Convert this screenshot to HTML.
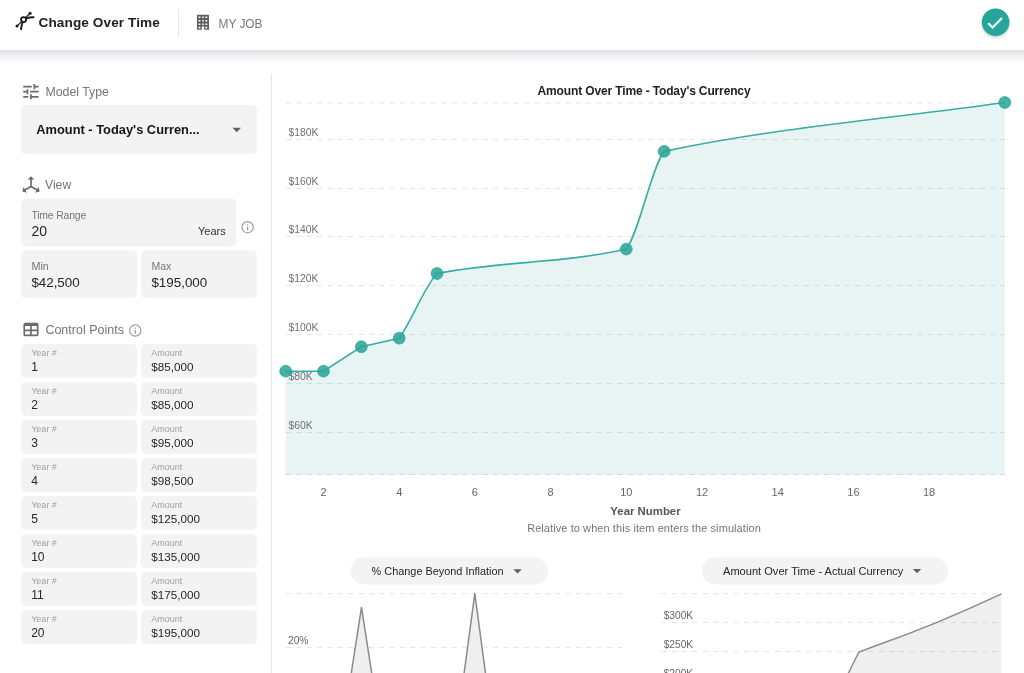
<!DOCTYPE html>
<html><head><meta charset="utf-8">
<style>
html,body{margin:0;padding:0;background:#fff;width:1024px;height:673px;overflow:hidden;}
svg{display:block;font-family:"Liberation Sans",sans-serif;will-change:transform;}
</style></head>
<body>
<svg width="1024" height="673" viewBox="0 0 1024 673">
<defs>
<linearGradient id="hs" x1="0" y1="0" x2="0" y2="1">
<stop offset="0" stop-color="#dfe0e6"/>
<stop offset="0.35" stop-color="#f0f0f3"/>
<stop offset="1" stop-color="#ffffff"/>
</linearGradient>
<filter id="bs" x="-50%" y="-50%" width="200%" height="200%"><feDropShadow dx="0" dy="1.5" stdDeviation="1.5" flood-color="#000" flood-opacity="0.18"/></filter>
</defs>
<!-- header -->
<rect x="0" y="50" width="1024" height="14" fill="url(#hs)"/>
<rect x="0" y="0" width="1024" height="50" fill="#fff"/>
<g fill="none" stroke="#1a1a1a">
<line x1="17" y1="26.1" x2="30.1" y2="13.2" stroke-width="1.2"/>
<circle cx="23.6" cy="19.6" r="2.55" stroke-width="1.8" fill="#fff"/>
<path d="M21.1,29.2 C21.5,26 22,23.5 22.6,22.2 M26.4,18.3 C28.5,17.5 31,17.1 33.6,17.2" stroke-width="1.9" stroke-linecap="round"/>
</g>
<circle cx="17" cy="26.1" r="1.5" fill="#1a1a1a"/>
<circle cx="30.1" cy="13.2" r="1.5" fill="#1a1a1a"/>
<text x="38.5" y="26.5" font-size="13.6" font-weight="bold" letter-spacing="0.1" fill="#212121">Change Over Time</text>
<line x1="178.5" y1="9" x2="178.5" y2="36" stroke="#e3e3e3" stroke-width="1"/>
<g fill="#5f5f5f">
<path d="M197,14.8 H209 V29.8 H204.1 V26.4 H201.8 V29.8 H197 Z M198.6,16.4 V18 H200.4 V16.4 Z M202.2,16.4 V18 H203.8 V16.4 Z M205.4,16.4 V18 H207.2 V16.4 Z M198.6,20 V21.6 H200.4 V20 Z M202.2,20 V21.6 H203.8 V20 Z M205.4,20 V21.6 H207.2 V20 Z M198.6,23.4 V25 H200.4 V23.4 Z M202.2,23.4 V25 H203.8 V23.4 Z M205.4,23.4 V25 H207.2 V23.4 Z M198.6,26.8 V28.4 H200.4 V26.8 Z M205.4,26.8 V28.4 H207.2 V26.8 Z" fill-rule="evenodd"/>
</g>
<text x="218.5" y="27.7" font-size="11.9" fill="#757575">MY JOB</text>
<circle cx="995.6" cy="22.2" r="13.8" fill="#26a69a" filter="url(#bs)"/>
<polyline points="988.2,23.3 992.6,27.6 1002,18.1" fill="none" stroke="#fff" stroke-width="2.1"/>

<!-- left panel -->
<line x1="271.5" y1="74" x2="271.5" y2="673" stroke="#e4e4e4" stroke-width="1"/>
<path transform="translate(20.7,81.5) scale(0.85)" fill="#6b6b6b" d="M3 17v2h6v-2H3zM3 5v2h10V5H3zm10 16v-2h8v-2h-8v-2h-2v6h2zM7 9v2H3v2h4v2h2V9H7zm14 4v-2H11v2h10zm-6-4h2V7h4V5h-4V3h-2v6z"/>
<text x="45.4" y="95.8" font-size="12.35" fill="#757575">Model Type</text>
<rect x="21" y="105" width="236" height="49" rx="5" fill="#f3f3f3"/>
<text x="36.3" y="133.5" font-size="12.85" font-weight="bold" fill="#161616">Amount - Today's Curren...</text>
<path d="M232.5,127.7 H241 L236.75,132.2 Z" fill="#5f5f5f"/>

<path transform="translate(21.05,174.5) scale(0.83)" fill="#6b6b6b" d="M12,2L16,6H13V13.85L19.53,17.61L21,15.03L22.5,20.5L17,21.96L18.53,19.35L12,15.58L5.47,19.35L7,21.96L1.5,20.5L3,15.03L4.47,17.61L11,13.85V6H8L12,2Z"/>
<text x="45" y="188.7" font-size="12.2" fill="#757575">View</text>
<rect x="21" y="198.5" width="215.2" height="48" rx="5" fill="#f3f3f3"/>
<text x="31.4" y="218.6" font-size="10.4" letter-spacing="-0.15" fill="#757575">Time Range</text>
<text x="31.4" y="235.8" font-size="14" fill="#262626">20</text>
<text x="225.7" y="234.8" font-size="11" fill="#333" text-anchor="end">Years</text>
<path transform="translate(240.1,219.7) scale(0.625)" fill="#9a9a9a" d="M11,9H13V7H11M12,20C7.59,20 4,16.41 4,12C4,7.59 7.59,4 12,4C16.41,4 20,7.59 20,12C20,16.41 16.41,20 12,20M12,2A10,10 0 0,0 2,12A10,10 0 0,0 12,22A10,10 0 0,0 22,12A10,10 0 0,0 12,2M11,17H13V11H11V17Z"/>
<rect x="21" y="250.5" width="116" height="47.5" rx="5" fill="#f3f3f3"/>
<rect x="141" y="250.5" width="116" height="47.5" rx="5" fill="#f3f3f3"/>
<text x="31.4" y="270.1" font-size="10.8" fill="#757575">Min</text>
<text x="31.4" y="287.3" font-size="13.35" fill="#262626">$42,500</text>
<text x="151.4" y="270.1" font-size="10.5" fill="#757575">Max</text>
<text x="151.4" y="287.3" font-size="13.4" fill="#262626">$195,000</text>

<path transform="translate(20.9,319.4) scale(0.84)" fill="#6b6b6b" d="M5,4H19A2,2 0 0,1 21,6V18A2,2 0 0,1 19,20H5A2,2 0 0,1 3,18V6A2,2 0 0,1 5,4M5,8V12H11V8H5M13,8V12H19V8H13M5,14V18H11V14H5M13,14V18H19V14H13Z"/>
<text x="45.4" y="334" font-size="12.5" fill="#757575">Control Points</text>
<path transform="translate(127.8,323.1) scale(0.625)" fill="#9a9a9a" d="M11,9H13V7H11M12,20C7.59,20 4,16.41 4,12C4,7.59 7.59,4 12,4C16.41,4 20,7.59 20,12C20,16.41 16.41,20 12,20M12,2A10,10 0 0,0 2,12A10,10 0 0,0 12,22A10,10 0 0,0 22,12A10,10 0 0,0 12,2M11,17H13V11H11V17Z"/>
<rect x="21" y="344" width="116" height="34" rx="5" fill="#f3f3f3"/><rect x="141" y="344" width="116" height="34" rx="5" fill="#f3f3f3"/><text x="31.2" y="356.4" font-size="9" fill="#9e9e9e">Year #</text><text x="31.2" y="370.7" font-size="12" fill="#262626">1</text><text x="151.2" y="356.4" font-size="9" fill="#9e9e9e">Amount</text><text x="151.2" y="370.7" font-size="11.7" fill="#262626">$85,000</text><rect x="21" y="382" width="116" height="34" rx="5" fill="#f3f3f3"/><rect x="141" y="382" width="116" height="34" rx="5" fill="#f3f3f3"/><text x="31.2" y="394.4" font-size="9" fill="#9e9e9e">Year #</text><text x="31.2" y="408.7" font-size="12" fill="#262626">2</text><text x="151.2" y="394.4" font-size="9" fill="#9e9e9e">Amount</text><text x="151.2" y="408.7" font-size="11.7" fill="#262626">$85,000</text><rect x="21" y="420" width="116" height="34" rx="5" fill="#f3f3f3"/><rect x="141" y="420" width="116" height="34" rx="5" fill="#f3f3f3"/><text x="31.2" y="432.4" font-size="9" fill="#9e9e9e">Year #</text><text x="31.2" y="446.7" font-size="12" fill="#262626">3</text><text x="151.2" y="432.4" font-size="9" fill="#9e9e9e">Amount</text><text x="151.2" y="446.7" font-size="11.7" fill="#262626">$95,000</text><rect x="21" y="458" width="116" height="34" rx="5" fill="#f3f3f3"/><rect x="141" y="458" width="116" height="34" rx="5" fill="#f3f3f3"/><text x="31.2" y="470.4" font-size="9" fill="#9e9e9e">Year #</text><text x="31.2" y="484.7" font-size="12" fill="#262626">4</text><text x="151.2" y="470.4" font-size="9" fill="#9e9e9e">Amount</text><text x="151.2" y="484.7" font-size="11.7" fill="#262626">$98,500</text><rect x="21" y="496" width="116" height="34" rx="5" fill="#f3f3f3"/><rect x="141" y="496" width="116" height="34" rx="5" fill="#f3f3f3"/><text x="31.2" y="508.4" font-size="9" fill="#9e9e9e">Year #</text><text x="31.2" y="522.7" font-size="12" fill="#262626">5</text><text x="151.2" y="508.4" font-size="9" fill="#9e9e9e">Amount</text><text x="151.2" y="522.7" font-size="11.7" fill="#262626">$125,000</text><rect x="21" y="534" width="116" height="34" rx="5" fill="#f3f3f3"/><rect x="141" y="534" width="116" height="34" rx="5" fill="#f3f3f3"/><text x="31.2" y="546.4" font-size="9" fill="#9e9e9e">Year #</text><text x="31.2" y="560.7" font-size="12" fill="#262626">10</text><text x="151.2" y="546.4" font-size="9" fill="#9e9e9e">Amount</text><text x="151.2" y="560.7" font-size="11.7" fill="#262626">$135,000</text><rect x="21" y="572" width="116" height="34" rx="5" fill="#f3f3f3"/><rect x="141" y="572" width="116" height="34" rx="5" fill="#f3f3f3"/><text x="31.2" y="584.4" font-size="9" fill="#9e9e9e">Year #</text><text x="31.2" y="598.7" font-size="12" fill="#262626">11</text><text x="151.2" y="584.4" font-size="9" fill="#9e9e9e">Amount</text><text x="151.2" y="598.7" font-size="11.7" fill="#262626">$175,000</text><rect x="21" y="610" width="116" height="34" rx="5" fill="#f3f3f3"/><rect x="141" y="610" width="116" height="34" rx="5" fill="#f3f3f3"/><text x="31.2" y="622.4" font-size="9" fill="#9e9e9e">Year #</text><text x="31.2" y="636.7" font-size="12" fill="#262626">20</text><text x="151.2" y="622.4" font-size="9" fill="#9e9e9e">Amount</text><text x="151.2" y="636.7" font-size="11.7" fill="#262626">$195,000</text>

<!-- main chart -->
<text x="644" y="94.6" font-size="12" letter-spacing="-0.14" font-weight="bold" fill="#212121" text-anchor="middle">Amount Over Time - Today's Currency</text>
<path d="M285.65,371.19 L323.50,371.19 L361.35,346.76 L399.20,338.21 C411.82,320.95 424.43,286.43 437.05,273.48 C500.13,261.06 563.22,263.60 626.30,249.06 C638.92,232.77 651.53,167.64 664.15,151.35 C777.70,127.30 891.25,118.53 1004.80,102.50 L1004.80,475.00 L285.65,475.00 Z" fill="#e8f4f4"/>
<g stroke="#000" stroke-opacity="0.1" stroke-width="1" stroke-dasharray="5.175 5.175"><line x1="286" x2="1005" y1="103.0" y2="103.0"/><line x1="286" x2="1005" y1="139.5" y2="139.5"/><line x1="286" x2="1005" y1="188.5" y2="188.5"/><line x1="286" x2="1005" y1="236.5" y2="236.5"/><line x1="286" x2="1005" y1="285.5" y2="285.5"/><line x1="286" x2="1005" y1="334.5" y2="334.5"/><line x1="286" x2="1005" y1="383.5" y2="383.5"/><line x1="286" x2="1005" y1="432.5" y2="432.5"/><line x1="286" x2="1005" y1="474.5" y2="474.5"/></g>
<g font-size="10.35" fill="#707070"><text x="288.6" y="135.6">$180K</text><text x="288.6" y="184.5">$160K</text><text x="288.6" y="233.3">$140K</text><text x="288.6" y="282.2">$120K</text><text x="288.6" y="331.0">$100K</text><text x="288.6" y="379.9">$80K</text><text x="288.6" y="428.8">$60K</text></g>
<path d="M285.65,371.19 L323.50,371.19 L361.35,346.76 L399.20,338.21 C411.82,320.95 424.43,286.43 437.05,273.48 C500.13,261.06 563.22,263.60 626.30,249.06 C638.92,232.77 651.53,167.64 664.15,151.35 C777.70,127.30 891.25,118.53 1004.80,102.50" fill="none" stroke="#3aada2" stroke-width="1.6"/>
<g fill="#2ca699" fill-opacity="0.88" stroke="#22a092" stroke-opacity="0.85" stroke-width="0.8"><circle cx="285.65" cy="371.19" r="5.9"/><circle cx="323.50" cy="371.19" r="5.9"/><circle cx="361.35" cy="346.76" r="5.9"/><circle cx="399.20" cy="338.21" r="5.9"/><circle cx="437.05" cy="273.48" r="5.9"/><circle cx="626.30" cy="249.06" r="5.9"/><circle cx="664.15" cy="151.35" r="5.9"/><circle cx="1004.80" cy="102.50" r="5.9"/></g>
<g font-size="11" fill="#666" text-anchor="middle"><text x="323.5" y="496">2</text><text x="399.2" y="496">4</text><text x="474.9" y="496">6</text><text x="550.6" y="496">8</text><text x="626.3" y="496">10</text><text x="702.0" y="496">12</text><text x="777.7" y="496">14</text><text x="853.4" y="496">16</text><text x="929.1" y="496">18</text></g>
<text x="645.5" y="515.1" font-size="11.4" font-weight="bold" fill="#555" text-anchor="middle">Year Number</text>
<text x="644" y="531.7" font-size="11" fill="#757575" text-anchor="middle" letter-spacing="0.08">Relative to when this item enters the simulation</text>

<!-- bottom charts -->
<rect x="350.5" y="557.2" width="197.5" height="27.4" rx="13.7" fill="#f3f3f3"/>
<text x="371.6" y="574.8" font-size="10.9" fill="#262626">% Change Beyond Inflation</text>
<path d="M513.4,569.3 H521.7 L517.55,573.5 Z" fill="#5f5f5f"/>
<rect x="702" y="557.2" width="246" height="27.4" rx="13.7" fill="#f3f3f3"/>
<text x="723" y="575" font-size="11.08" fill="#262626">Amount Over Time - Actual Currency</text>
<path d="M912.8,569 H921.2 L917,573.3 Z" fill="#5f5f5f"/>

<g stroke="#000" stroke-opacity="0.1" stroke-width="1" stroke-dasharray="5.175 5.175"><line x1="286" x2="622" y1="593.5" y2="593.5"/><line x1="286" x2="622" y1="647.5" y2="647.5"/></g>
<text x="288" y="644" font-size="10.2" fill="#666">20%</text>
<path d="M347.1,700 L361.5,607.4 L375.9,700 Z M460.5,700 L474.8,593.6 L489.1,700 Z" fill="#efefef" stroke="#8a8a8a" stroke-width="1.5" stroke-linejoin="round"/>

<g font-size="10.2" fill="#666"><text x="663.7" y="618.9">$300K</text><text x="663.7" y="648">$250K</text><text x="663.7" y="677">$200K</text></g>
<path d="M835,700 L858.9,652 L875,646 Q936,624.8 1001.4,593.9 V700 Z" fill="#efefef"/>
<g stroke="#000" stroke-opacity="0.1" stroke-width="1" stroke-dasharray="5.175 5.175"><line x1="661" x2="1001" y1="593.5" y2="593.5"/><line x1="661" x2="1001" y1="622.5" y2="622.5"/><line x1="661" x2="1001" y1="651.5" y2="651.5"/></g>
<path d="M835,700 L858.9,652 L875,646 Q936,624.8 1001.4,593.9" fill="none" stroke="#8a8a8a" stroke-width="1.5"/>
</svg>
</body></html>
